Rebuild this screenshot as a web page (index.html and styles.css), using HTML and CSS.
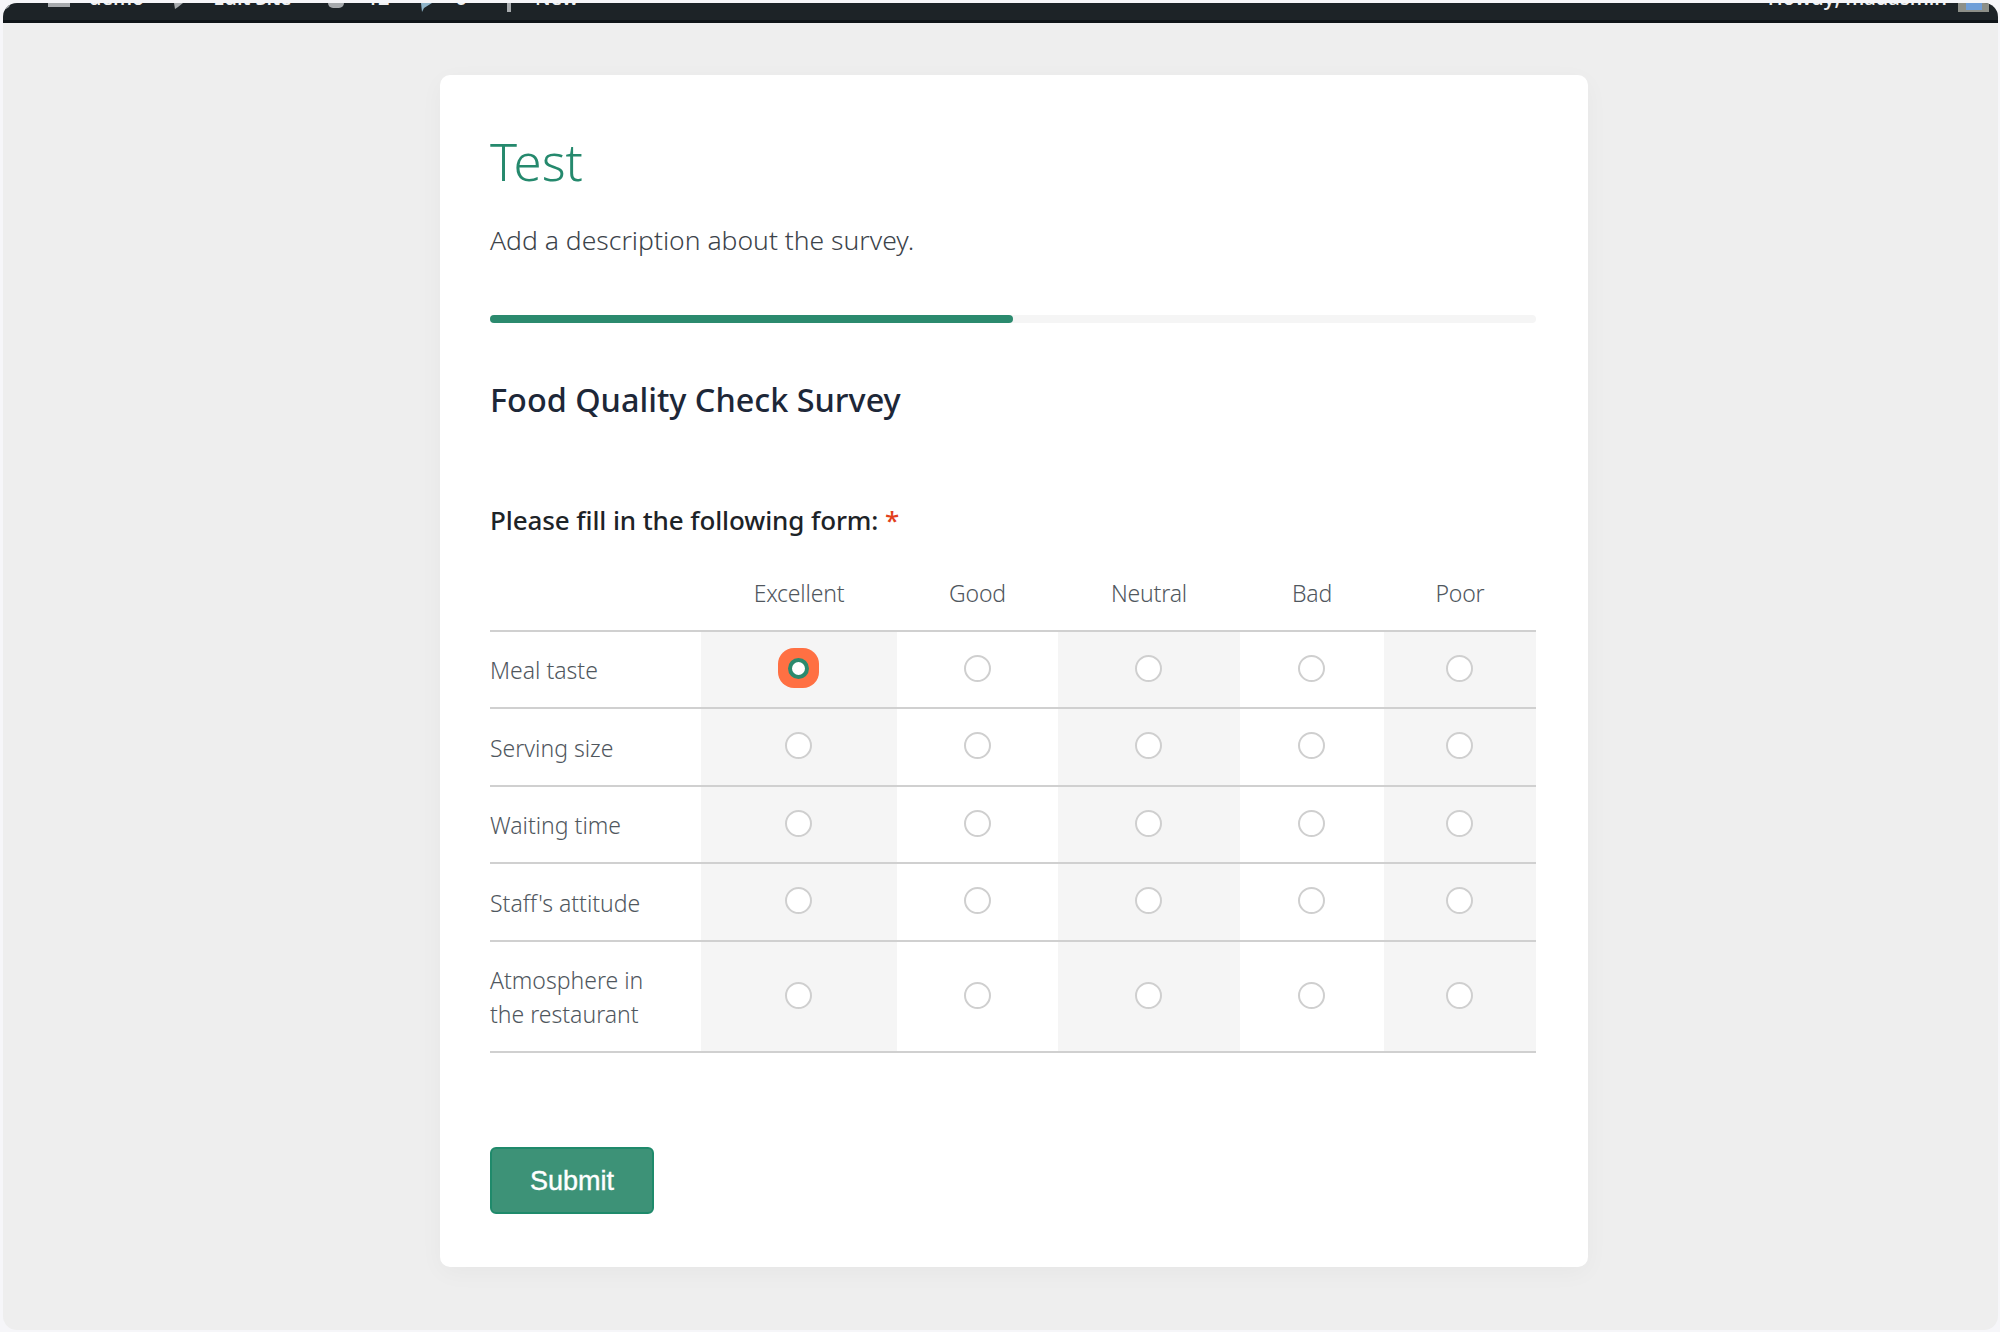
FILE: index.html
```html
<!DOCTYPE html>
<html lang="en">
<head>
<meta charset="utf-8">
<title>Test</title>
<link rel="stylesheet" href="styles.css">
</head>
<body>
<div class="shell">
  <div class="adminbar">
    <div class="bar-left">
      <svg class="ico ico-wp" width="14" height="6" viewBox="0 0 14 6"><path d="M1 0h5L4 4 1 6z" fill="#a7aaad"/></svg>
      <span class="ico-home"></span>
      <span class="bar-text t-demo">demo</span>
      <svg class="ico ico-pen" width="15" height="6" viewBox="0 0 15 6"><path d="M4 0h9L8 4 5 6z" fill="#a7aaad"/></svg>
      <span class="bar-text t-edit">Edit Site</span>
      <span class="ico-upd"></span>
      <span class="bar-text t-num">12</span>
      <svg class="ico ico-com" width="11" height="9" viewBox="0 0 11 9"><path d="M0 0h11L3 5 1 9z" fill="#8fb4c9"/></svg>
      <span class="bar-text t-zero">0</span>
      <span class="ico-plus"></span>
      <span class="bar-text t-new">New</span>
    </div>
    <div class="bar-right">
      <span class="bar-text">Howdy, madasmin</span>
      <span class="avatar"><span class="av-sky"></span></span>
    </div>
  </div>

  <main class="card">
    <h1 class="title">Test</h1>
    <p class="desc">Add a description about the survey.</p>
    <div class="track"><div class="fill" style="width:50%"></div></div>
    <h2 class="section">Food Quality Check Survey</h2>
    <p class="question">Please fill in the following form: <span class="req">*</span></p>
    <table class="matrix">
      <colgroup>
        <col class="c0"><col class="c1"><col class="c2"><col class="c3"><col class="c4"><col class="c5">
      </colgroup>
      <thead>
        <tr><th></th><th>Excellent</th><th>Good</th><th>Neutral</th><th>Bad</th><th>Poor</th></tr>
      </thead>
      <tbody>
        <tr class="r1"><td class="lbl">Meal taste</td><td class="alt"><span class="picked"><span class="radio on"></span></span></td><td><span class="radio"></span></td><td class="alt"><span class="radio"></span></td><td><span class="radio"></span></td><td class="alt"><span class="radio"></span></td></tr>
        <tr class="r2"><td class="lbl">Serving size</td><td class="alt"><span class="radio"></span></td><td><span class="radio"></span></td><td class="alt"><span class="radio"></span></td><td><span class="radio"></span></td><td class="alt"><span class="radio"></span></td></tr>
        <tr class="r1"><td class="lbl">Waiting time</td><td class="alt"><span class="radio"></span></td><td><span class="radio"></span></td><td class="alt"><span class="radio"></span></td><td><span class="radio"></span></td><td class="alt"><span class="radio"></span></td></tr>
        <tr class="r2"><td class="lbl">Staff's attitude</td><td class="alt"><span class="radio"></span></td><td><span class="radio"></span></td><td class="alt"><span class="radio"></span></td><td><span class="radio"></span></td><td class="alt"><span class="radio"></span></td></tr>
        <tr class="r3"><td class="lbl">Atmosphere in<br>the restaurant</td><td class="alt"><span class="radio"></span></td><td><span class="radio"></span></td><td class="alt"><span class="radio"></span></td><td><span class="radio"></span></td><td class="alt"><span class="radio"></span></td></tr>
      </tbody>
    </table>
    <button class="submit" type="button">Submit</button>
  </main>
</div>
</body>
</html>
```

FILE: styles.css
```css
* { box-sizing: border-box; }
html, body { margin: 0; padding: 0; }
body {
  width: 2000px;
  height: 1332px;
  background: #f6f6f9;
  overflow: hidden;
  font-family: "Noto Sans", "Open Sans", sans-serif;
}
.shell {
  margin: 3px 2px 2px 3px;
  height: 1327px;
  background: #eeeeee;
  border-radius: 14px;
  overflow: hidden;
}
.adminbar {
  height: 20px;
  background: #1d2327;
  border-bottom: 3px solid #0f1418;
  display: flex;
  justify-content: space-between;
  align-items: flex-start;
  overflow: hidden;
  border-radius: 10px 10px 0 0;
}
.bar-left, .bar-right { display: flex; align-items: flex-start; height: 17px; }
.bar-left { padding-left: 2px; }
.bar-right { padding-right: 9px; gap: 11px; }
.bar-text {
  font-family: "Open Sans", sans-serif;
  font-weight: 600;
  font-size: 20px;
  line-height: 30px;
  color: #f0f0f1;
  margin-top: -20px;
  white-space: nowrap;
}
.ico { display: block; flex: none; }
.ico-home { width: 22px; height: 4px; background: #a7aaad; margin-left: 29px; flex: none; }
.t-demo { margin-left: 19px; }
.ico-pen { margin-left: 26px; }
.t-edit { margin-left: 28px; }
.ico-upd { width: 16px; height: 5px; background: #a7aaad; border-radius: 0 0 8px 8px; margin-left: 36px; flex: none; }
.t-num { margin-left: 23px; }
.ico-com { margin-left: 32px; }
.t-zero { margin-left: 23px; }
.ico-plus { width: 4px; height: 9px; background: #a7aaad; margin-left: 40px; flex: none; }
.t-new { margin-left: 24px; }
.avatar { width: 31px; height: 9px; background: #8d8f88; display: flex; justify-content: center; flex: none; }
.av-sky { width: 16px; height: 7px; background: #6f9ed8; }

.card {
  width: 1148px;
  height: 1192px;
  margin: 52px 0 0 437px;
  padding: 51px 52px 0 50px;
  background: #ffffff;
  border-radius: 10px;
  box-shadow: 0 6px 24px rgba(0, 0, 0, 0.035);
}
.title {
  margin: 0;
  font-family: "Noto Sans", sans-serif;
  font-weight: 300;
  font-size: 51px;
  line-height: 70px;
  color: #25896d;
  height: 70px;
}
.desc {
  margin: 26px 0 0;
  font-weight: 300;
  font-size: 26.5px;
  line-height: 36px;
  color: #3c434a;
}
.track {
  margin-top: 57px;
  height: 8px;
  border-radius: 4px;
  background: #f5f5f5;
}
.fill { height: 8px; border-radius: 4px; background: #2b8a6e; }
.section {
  margin: 54px 0 0;
  font-weight: 500;
  font-size: 32.4px;
  line-height: 44px;
  color: #1d2738;
}
.question {
  margin: 77px 0 0;
  font-weight: 500;
  font-size: 26px;
  line-height: 44px;
  color: #1d2327;
  letter-spacing: -0.1px;
}
.req { color: #e2401c; }
.matrix {
  margin-top: 21px;
  width: 1046px;
  table-layout: fixed;
  border-collapse: collapse;
}
.c0 { width: 211px; }
.c1 { width: 196px; }
.c2 { width: 161px; }
.c3 { width: 182px; }
.c4 { width: 144px; }
.c5 { width: 152px; }
.matrix th {
  height: 68px;
  padding: 0 0 8px;
  font-weight: 300;
  font-size: 23px;
  color: #50575e;
  letter-spacing: -0.2px;
  text-align: center;
  border-bottom: 2px solid #d0d0d0;
}
.matrix td {
  padding: 0;
  text-align: center;
  vertical-align: middle;
  border-bottom: 2px solid #d0d0d0;
  font-size: 0;
}
.r1 td { height: 77px; }
.r2 td { height: 78px; }
.r3 td { height: 111px; }
.matrix .lbl {
  text-align: left;
  font-weight: 300;
  font-size: 23px;
  line-height: 34px;
  color: #50575e;
  padding-top: 1px;
}
.alt { background: #f5f5f5; }
.radio {
  display: inline-block;
  width: 27px;
  height: 27px;
  border: 2px solid #cfcfcf;
  border-radius: 50%;
  background: #ffffff;
  vertical-align: middle;
  margin: 0 1px 3px 0;
}
.picked {
  display: inline-flex;
  align-items: center;
  justify-content: center;
  width: 41px;
  height: 40px;
  border-radius: 16px;
  background: #ff7043;
  vertical-align: middle;
  margin: 0 1px 3px 0;
}
.radio.on {
  width: 21px;
  height: 21px;
  border: 4px solid #2b8a6e;
  margin: 0;
}
.submit {
  display: block;
  margin-top: 94px;
  width: 164px;
  height: 67px;
  padding: 2px 0 0;
  background: #3d9277;
  border: 2px solid #1f8a6b;
  border-radius: 6px;
  color: #ffffff;
  font-family: "Liberation Sans", Arial, sans-serif;
  font-size: 27px;
  -webkit-text-stroke: 0.4px #ffffff;
  text-align: center;
}
```
